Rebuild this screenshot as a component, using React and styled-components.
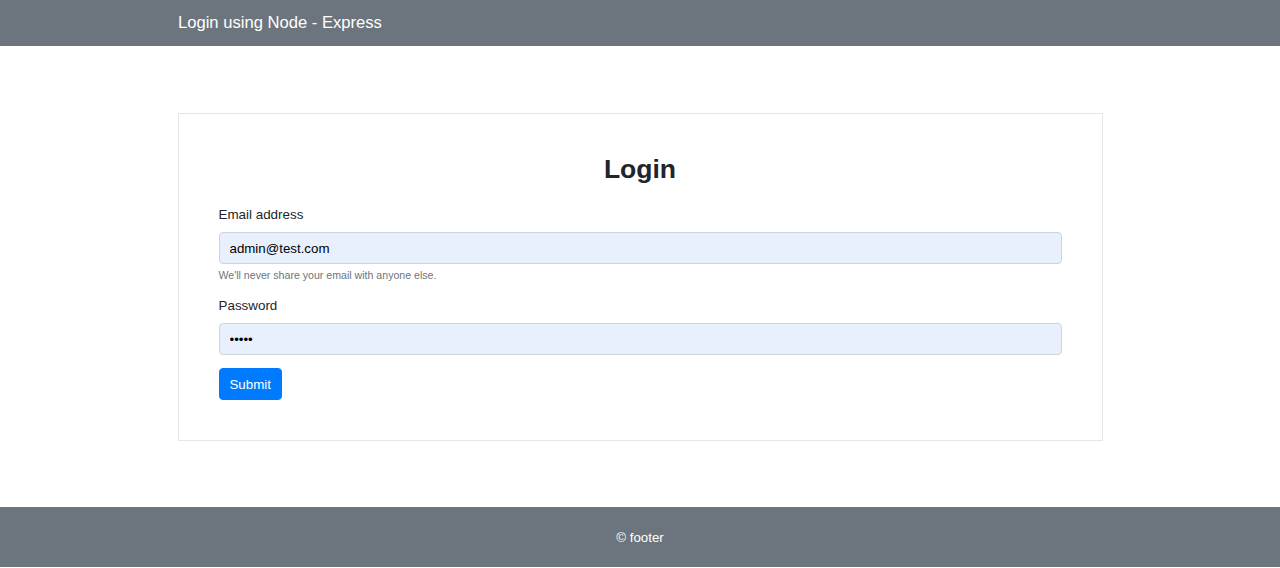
import React from "react";
import styled, { createGlobalStyle } from "styled-components";

const GlobalStyle = createGlobalStyle`
    html, body {
        margin: 0;
        padding: 0;
        background: #fff;
        font-family: "Liberation Sans", Arial, sans-serif;
        color: #212529;
    }
    * { box-sizing: border-box; }
`;

const Page = styled.div`
    display: flex;
    flex-direction: column;
    min-height: 567px;
`;

const Navbar = styled.nav`
    height: 46px;
    background-color: #6c757d;
    display: flex;
    align-items: center;
    padding-left: 178px;
`;

const Brand = styled.span`
    color: #fff;
    font-size: 16.6px;
`;

const Main = styled.main`
    flex: 1;
    display: flex;
    justify-content: center;
    padding: 67px 0 66px;
`;

const Card = styled.div`
    width: 925px;
    border: 1px solid #e6e6e6;
    padding: 40px 40px 39px;
`;

const Title = styled.h2`
    margin: 0 0 20px;
    text-align: center;
    font-size: 26.5px;
    line-height: 30px;
    font-weight: 700;
`;

const FormGroup = styled.div`
    margin-bottom: ${(p) => p.$mb || 12}px;
`;

const Label = styled.label`
    display: block;
    font-size: 13.4px;
    line-height: 21px;
    margin-bottom: 7px;
`;

const Input = styled.input`
    display: block;
    width: 100%;
    height: 32px;
    padding: 0 10px;
    font-family: inherit;
    font-size: 13.3px;
    color: #000;
    background-color: #e8f0fe;
    border: 1px solid #ced4da;
    border-radius: 4px;
    outline: none;
`;

const Help = styled.small`
    display: block;
    margin-top: 3px;
    font-size: 10.6px;
    line-height: 16px;
    color: #6c757d;
`;

const Button = styled.button`
    height: 32px;
    padding: 0 10px;
    font-family: inherit;
    font-size: 13.3px;
    color: #fff;
    background-color: #007bff;
    border: 1px solid #007bff;
    border-radius: 4px;
    cursor: pointer;
`;

const Footer = styled.footer`
    height: 60px;
    background-color: #6c757d;
    color: #fff;
    font-size: 13.3px;
    display: flex;
    align-items: center;
    justify-content: center;
`;

const App = () => {
    return (
        <>
            <GlobalStyle />
            <Page>
                <Navbar>
                    <Brand>Login using Node - Express</Brand>
                </Navbar>
                <Main>
                    <Card>
                        <Title>Login</Title>
                        <form onSubmit={(e) => e.preventDefault()}>
                            <FormGroup>
                                <Label>Email address</Label>
                                <Input type="email" defaultValue="admin@test.com" />
                                <Help>We'll never share your email with anyone else.</Help>
                            </FormGroup>
                            <FormGroup $mb={13}>
                                <Label>Password</Label>
                                <Input type="password" defaultValue="admin" />
                            </FormGroup>
                            <Button type="submit">Submit</Button>
                        </form>
                    </Card>
                </Main>
                <Footer>© footer</Footer>
            </Page>
        </>
    );
};

export default App;
